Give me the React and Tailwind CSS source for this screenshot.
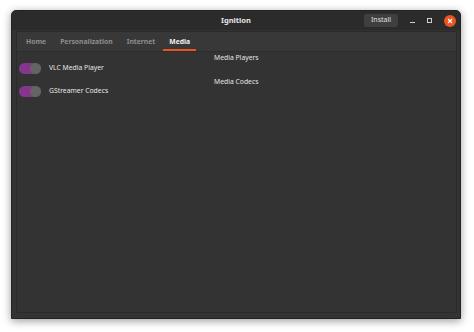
export default function App() {
  const font = { fontFamily: '"Noto Sans", "Open Sans", sans-serif' };
  return (
    <div className="w-[474px] h-[332px] bg-white pt-[10px] pl-[11px]" style={font}>
      <div className="w-[450px] h-[309px] flex flex-col rounded-t-[5px] overflow-hidden shadow-[0_2px_8px_rgba(0,0,0,0.4)] bg-[#333333] border border-[#232323]">
        <div className="relative h-[19px] bg-[#2b2b2b] flex items-center shrink-0">
          <div className="absolute inset-0 flex items-center justify-center text-[7.5px] font-bold text-[#e6e6e6]">Ignition</div>
          <div className="ml-auto flex items-center h-full relative">
            <div className="h-[13px] w-[34px] bg-[#3f3f3f] rounded-[2px] flex items-center justify-center text-[7px] text-[#e0e0e0]">Install</div>
            <div className="w-[5px] h-[1px] bg-[#cfcfcf] ml-[12px] mt-[4px]" />
            <div className="w-[5px] h-[5px] border border-[#cfcfcf] ml-[12px]" />
            <div className="w-[12px] h-[12px] rounded-full bg-[#e95420] ml-[12px] mr-[4px] flex items-center justify-center">
              <svg width="6" height="6" viewBox="0 0 6 6"><path d="M1 1L5 5M5 1L1 5" stroke="#fff" strokeWidth="1.1" /></svg>
            </div>
          </div>
        </div>
        <div className="flex-1 pt-[1px] pl-[4px] pr-[3px] pb-[5px] flex">
          <div className="flex-1 flex flex-col border border-[#2a2a2a]">
            <div className="h-[20px] bg-[#383838] border-b border-[#2c2c2c] flex items-end pl-[3px] shrink-0">
              {['Home', 'Personalization', 'Internet', 'Media'].map((t) => {
                const active = t === 'Media';
                return (
                  <div key={t} className={`h-full px-[6px] mr-[2px] flex items-center text-[6.8px] font-bold ${active ? 'text-[#f2f2f2] border-b-2 border-[#e95420]' : 'text-[#8e8e8e]'}`}>
                    <span className={active ? 'mt-[3px]' : 'mt-[1px]'}>{t}</span>
                  </div>
                );
              })}
            </div>
            <div className="flex-1 flex">
              <div className="w-[197px] pl-[2px] pt-[11px] flex flex-col gap-[12px]">
                {['VLC Media Player', 'GStreamer Codecs'].map((l) => (
                  <div key={l} className="flex items-center h-[11px]">
                    <div className="w-[22px] h-[11px] rounded-full bg-[#86358c] relative">
                      <div className="absolute right-0 top-0 w-[11px] h-[11px] rounded-full bg-[#646464]" />
                    </div>
                    <span className="ml-[8px] text-[6.8px] text-[#e6e6e6]">{l}</span>
                  </div>
                ))}
              </div>
              <div className="pt-[1px] flex flex-col gap-[14px] text-[6.8px] text-[#e6e6e6]">
                <div>Media Players</div>
                <div>Media Codecs</div>
              </div>
            </div>
          </div>
        </div>
      </div>
    </div>
  );
}
